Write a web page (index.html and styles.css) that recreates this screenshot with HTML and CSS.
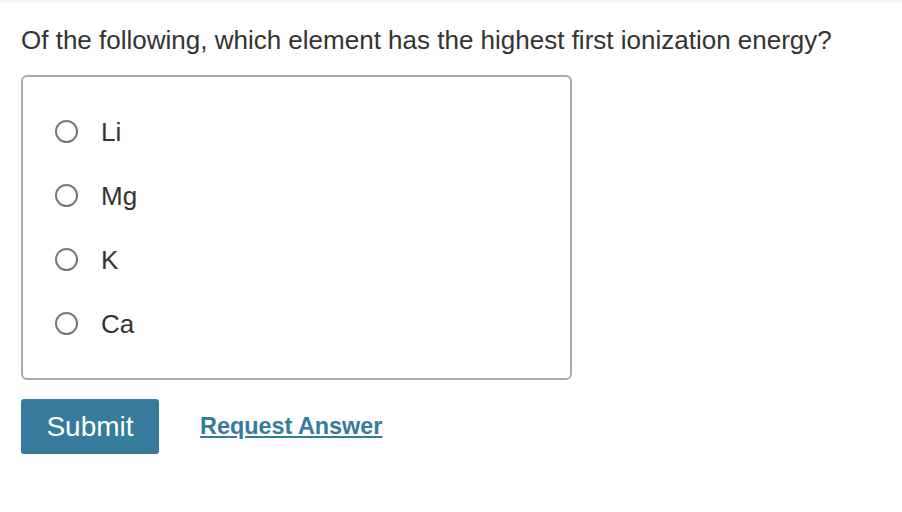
FILE: index.html
```html
<!DOCTYPE html>
<html lang="en">

<head>
    <meta charset="UTF-8">
    <meta name="viewport" content="width=device-width, initial-scale=1.0">
    <title>Question</title>
    <link rel="stylesheet" href="styles.css">
</head>

<body>
    <div class="top-strip"></div>
    <div class="container">
        <p class="question">Of the following, which element has the highest first ionization energy?</p>
        <div class="choices">
            <label class="choice"><input type="radio" name="answer" value="Li"><span class="dot"></span>Li</label>
            <label class="choice"><input type="radio" name="answer" value="Mg"><span class="dot"></span>Mg</label>
            <label class="choice"><input type="radio" name="answer" value="K"><span class="dot"></span>K</label>
            <label class="choice"><input type="radio" name="answer" value="Ca"><span class="dot"></span>Ca</label>
        </div>
        <div class="actions">
            <button class="submit-button">Submit</button>
            <a class="request-link" href="#">Request Answer</a>
        </div>
    </div>
</body>
</html>
```

FILE: styles.css
```css
body {
    font-family: Arial, "Liberation Sans", sans-serif;
    margin: 0;
    background-color: #ffffff;
    color: #333333;
}

.top-strip {
    height: 3px;
    background-color: #f5f5f5;
}

.container {
    padding: 0 21px;
}

.question {
    font-size: 26px;
    line-height: 30px;
    margin: 22px 0 20px;
}

.choices {
    box-sizing: border-box;
    width: 551px;
    border: 2px solid #aaaaaa;
    border-radius: 6px;
    padding: 22px 0 23px 32px;
}

.choice {
    display: flex;
    align-items: center;
    height: 64px;
    font-size: 26px;
    padding-top: 2px;
    box-sizing: border-box;
    cursor: pointer;
}

.choice input {
    display: none;
}

.dot {
    width: 19px;
    height: 19px;
    border: 2px solid #777777;
    border-radius: 50%;
    margin-right: 23px;
    margin-top: -2px;
}

.actions {
    display: flex;
    align-items: center;
    margin-top: 19px;
}

.submit-button {
    width: 138px;
    height: 55px;
    background-color: #367a9c;
    color: #ffffff;
    border: none;
    border-radius: 3px;
    font-family: Arial, "Liberation Sans", sans-serif;
    font-size: 28px;
    cursor: pointer;
}

.request-link {
    margin-left: 41px;
    font-size: 23.4px;
    font-weight: bold;
    color: #367a9c;
}
```
